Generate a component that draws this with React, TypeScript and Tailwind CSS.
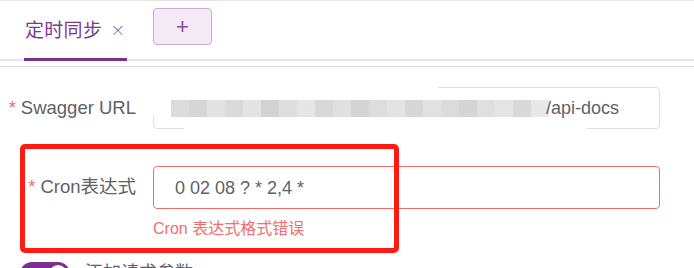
const blocks = [
  '#dcdcdc', '#d6d6d6', '#e2e2e2', '#dadada', '#e4e4e4', '#d2d2d2', '#dedede', '#e6e6e6',
  '#d8d8d8', '#e0e0e0', '#d4d4d4', '#dddddd', '#e3e3e3', '#d7d7d7', '#e1e1e1', '#dbdbdb',
  '#d5d5d5', '#dfdfdf', '#e5e5e5', '#d9d9d9', '#e8e8e8',
]

export default function App() {
  return (
    <div className="relative h-[268px] w-[694px] overflow-hidden bg-white font-['Liberation_Sans','Noto_Sans_CJK_SC',sans-serif] text-[#606266]">
      <div className="border-t border-[#e6e6e6]" />

      {/* tab header */}
      <div className="flex h-[60px] items-stretch border-b-2 border-[#e4e7ed] pl-6">
        <div className="-mb-[2px] flex w-[103px] shrink-0 items-center gap-[8px] whitespace-nowrap border-b-[3px] border-[#7b2f8e] pl-[1px] pt-[1px]">
          <span className="text-[19px] leading-none tracking-[0.3px] text-[#7b3a8f]">定时同步</span>
          <span className="font-['DejaVu_Sans',sans-serif] text-[18px] font-extralight leading-none text-[#8b6d97]">×</span>
        </div>
        <div className="ml-[26px] flex items-center pb-[7px]">
          <button
            type="button"
            className="flex h-[37px] w-[59px] items-center justify-center rounded-[4px] border border-[#cba8d6] bg-[#f4eaf6] text-[22px] font-light leading-none text-[#8e4a9e]"
          >
            +
          </button>
        </div>
      </div>
      <div className="mt-[5px] border-t border-[#dcdcdc]" />

      {/* form */}
      <div className="pt-[20px]">
        <div className="flex items-center">
          <label className="w-[136px] whitespace-nowrap text-right text-[18.5px] leading-none">
            <span className="mr-[5px] text-[#f56c6c]">*</span>Swagger URL
          </label>
          <div className="relative ml-[17px] flex h-[42px] w-[507px] items-center rounded-[4px] border border-[#dcdfe6] pl-[17px]">
            <div className="absolute -left-[2px] -top-[2px] h-[4px] w-[286px] bg-white" />
            <div className="absolute -bottom-[2px] h-[4px] w-[402px] rounded-l-[6px] bg-white" style={{ left: 30 }} />
            <div className="absolute -left-[2px] top-0 h-[28px] w-[4px] bg-white" />
            <div className="flex h-[17px]">
              {blocks.map((c, i) => (
                <div key={i} className="h-full w-[18px]" style={{ backgroundColor: c }} />
              ))}
            </div>
            <span className="-ml-[3px] text-[18px] leading-none text-[#606266]">/api-docs</span>
          </div>
        </div>

        <div className="mt-[37px] flex items-center">
          <label className="w-[136px] whitespace-nowrap text-right text-[18.5px] leading-none">
            <span className="mr-[5px] text-[#f56c6c]">*</span>Cron表达式
          </label>
          <div className="ml-[17px] flex h-[43px] w-[507px] items-center rounded-[4px] border border-[#f56c6c] pl-[21px] text-[18px] leading-none">
            0 02 08 ? * 2,4 *
          </div>
        </div>
        <div className="ml-[153px] mt-[9px] text-[16px] leading-[22px] text-[#f56c6c]">Cron 表达式格式错误</div>

        <div className="ml-[20px] mt-[22px] flex items-start gap-[15px]">
          <div className="relative h-[24px] w-[50px] rounded-full bg-[#7b2f8e]">
            <div className="absolute right-[3px] top-[3px] h-[18px] w-[18px] rounded-full bg-white" />
          </div>
          <span className="pt-[2px] text-[18px] leading-none text-[#606266]">添加请求参数</span>
        </div>
      </div>

      {/* annotation box */}
      <div className="pointer-events-none absolute left-[20px] top-[144px] h-[109px] w-[379px] rounded-[5px] border-[5px] border-[#ff1a14]" />
    </div>
  )
}
